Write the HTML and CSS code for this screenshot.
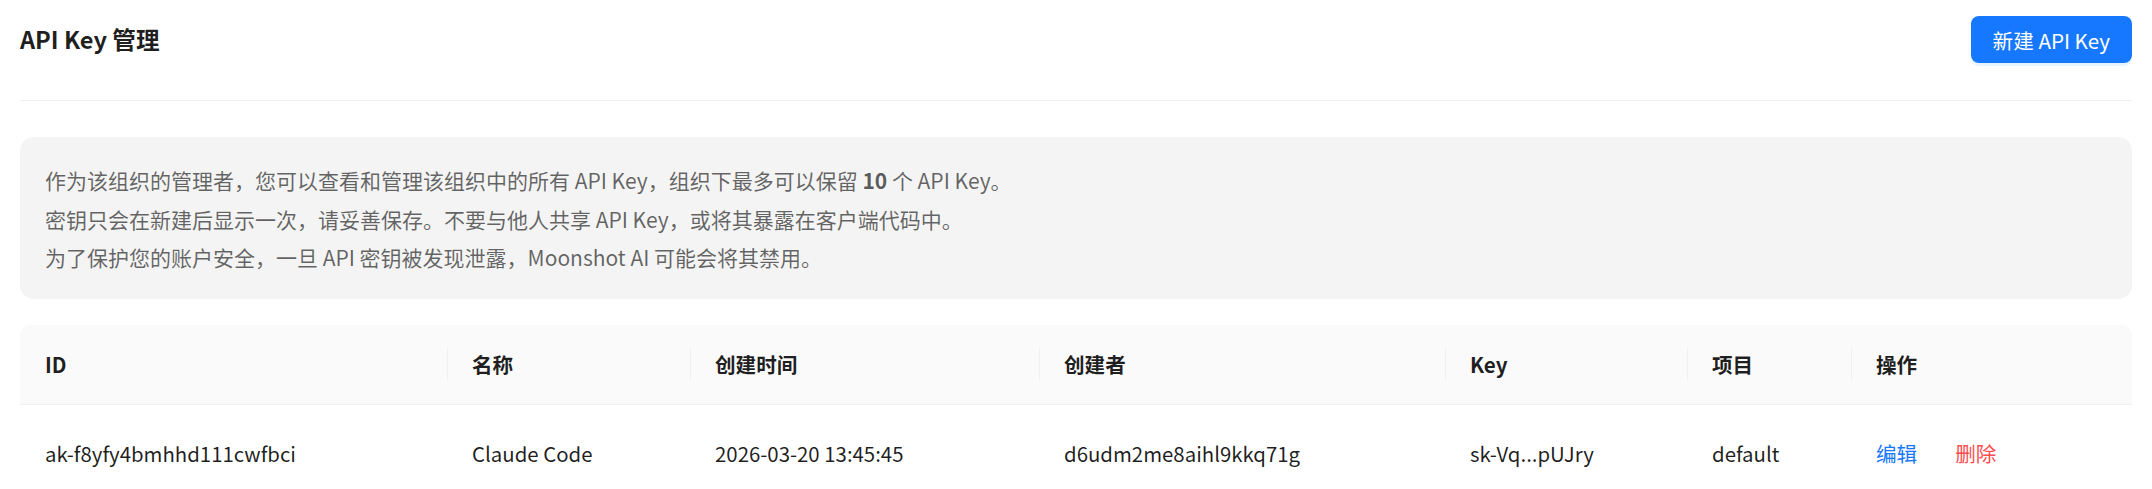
FILE: index.html
```html
<!DOCTYPE html>
<html lang="zh-CN">
<head>
<meta charset="utf-8">
<title>API Key 管理</title>
<link rel="stylesheet" href="styles.css">
</head>
<body>
<div class="page">
  <header class="page-header">
    <h1 class="page-title">API Key 管理</h1>
    <button class="btn-primary" type="button">新建 API Key</button>
  </header>

  <section class="notice">
    <p>作为该组织的管理者，您可以查看和管理该组织中的所有 API Key，组织下最多可以保留 <strong>10</strong> 个 API Key。</p>
    <p>密钥只会在新建后显示一次，请妥善保存。不要与他人共享 API Key，或将其暴露在客户端代码中。</p>
    <p>为了保护您的账户安全，一旦 API 密钥被发现泄露，Moonshot AI 可能会将其禁用。</p>
  </section>

  <table class="keys">
    <colgroup>
      <col class="c-id"><col class="c-name"><col class="c-time"><col class="c-creator"><col class="c-key"><col class="c-proj"><col class="c-act">
    </colgroup>
    <thead>
      <tr>
        <th>ID</th>
        <th>名称</th>
        <th>创建时间</th>
        <th>创建者</th>
        <th>Key</th>
        <th>项目</th>
        <th>操作</th>
      </tr>
    </thead>
    <tbody>
      <tr>
        <td>ak-f8yfy4bmhhd111cwfbci</td>
        <td>Claude Code</td>
        <td>2026-03-20 13:45:45</td>
        <td>d6udm2me8aihl9kkq71g</td>
        <td>sk-Vq...pUJry</td>
        <td>default</td>
        <td><span class="actions"><a class="link-edit" href="#">编辑</a><a class="link-del" href="#">删除</a></span></td>
      </tr>
    </tbody>
  </table>
</div>
</body>
</html>
```

FILE: styles.css
```css
* { box-sizing: border-box; }

html, body {
  margin: 0;
  padding: 0;
  background: #ffffff;
}

body {
  font-family: "Noto Sans CJK SC", "Noto Sans", sans-serif;
  color: rgba(0, 0, 0, 0.88);
  font-size: 20.4px;
}

.page {
  padding: 16px 20px 0 20px;
}

.page-header {
  display: flex;
  align-items: center;
  justify-content: space-between;
  padding-bottom: 37px;
  border-bottom: 1px solid #f0f0f0;
}

.page-title {
  margin: 0;
  font-size: 23.6px;
  font-weight: 600;
  line-height: 47px;
  color: rgba(0, 0, 0, 0.88);
}

.btn-primary {
  height: 47px;
  padding: 0 22px;
  border: none;
  border-radius: 8px;
  background: #1677ff;
  color: #ffffff;
  font-family: inherit;
  font-size: 20.6px;
  box-shadow: 0 3px 0 rgba(5, 145, 255, 0.1);
  cursor: pointer;
}

.notice {
  margin-top: 36px;
  background: #f4f4f4;
  border-radius: 14px;
  padding: 24px 25px 22px 25px;
  color: rgba(0, 0, 0, 0.6);
  font-size: 21px;
  line-height: 38.5px;
}

.notice p {
  margin: 0;
}

.notice strong {
  font-weight: 700;
  color: rgba(0, 0, 0, 0.65);
}

.keys {
  margin-top: 26px;
  width: 100%;
  border-collapse: separate;
  border-spacing: 0;
  table-layout: fixed;
}

.c-id { width: 427px; }
.c-name { width: 243px; }
.c-time { width: 349px; }
.c-creator { width: 406px; }
.c-key { width: 242px; }
.c-proj { width: 164px; }
.c-act { width: 281px; }

.keys th {
  position: relative;
  height: 80px;
  padding: 0 25px;
  background: #fafafa;
  border-bottom: 1px solid #f0f0f0;
  text-align: left;
  font-weight: 600;
  font-size: 20.6px;
  color: rgba(0, 0, 0, 0.88);
  line-height: 30px;
}

.keys th:first-child { border-top-left-radius: 11px; }
.keys th:last-child { border-top-right-radius: 11px; }

.keys th + th::before {
  content: "";
  position: absolute;
  left: 0;
  top: 50%;
  width: 1px;
  height: 32px;
  transform: translateY(-50%);
  background: #f0f0f0;
}

.keys td {
  padding: 33px 25px;
  line-height: 30px;
  white-space: nowrap;
  border-bottom: 1px solid #f0f0f0;
}

.actions {
  display: inline-flex;
  gap: 38px;
  font-size: 20.6px;
}

.actions a {
  text-decoration: none;
}

.link-edit { color: #1677ff; }
.link-del { color: #ff4d4f; }
```
